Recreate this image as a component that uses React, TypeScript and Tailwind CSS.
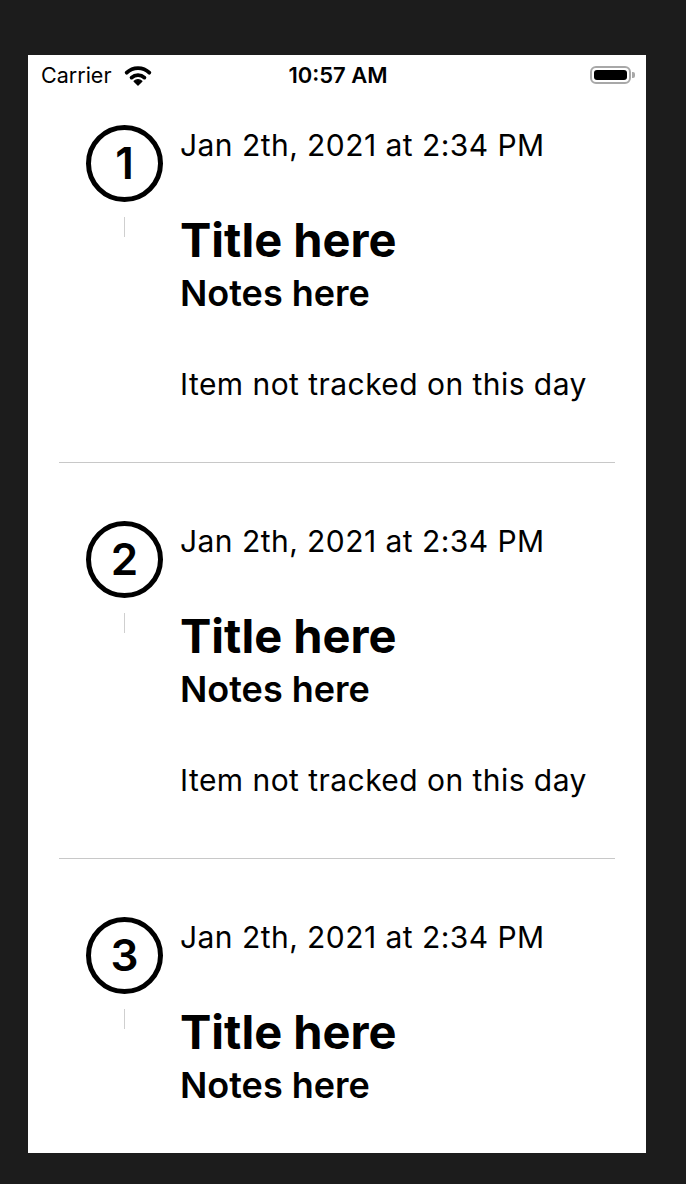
import React from "react";

type Entry = { n: number; date: string; title: string; notes: string; status?: string };

const entries: Entry[] = [
  { n: 1, date: "Jan 2th, 2021 at 2:34 PM", title: "Title here", notes: "Notes here", status: "Item not tracked on this day" },
  { n: 2, date: "Jan 2th, 2021 at 2:34 PM", title: "Title here", notes: "Notes here", status: "Item not tracked on this day" },
  { n: 3, date: "Jan 2th, 2021 at 2:34 PM", title: "Title here", notes: "Notes here" },
];

function Wifi() {
  return (
    <svg width="28" height="21" viewBox="0 0 28 21" className="ml-[13px]">
      <path d="M2.7 7.7 A16 16 0 0 1 25.3 7.7" fill="none" stroke="black" strokeWidth="3.8" strokeLinecap="round" />
      <path d="M7.6 12.6 A9.3 9.3 0 0 1 20.4 12.6" fill="none" stroke="black" strokeWidth="3.8" strokeLinecap="round" />
      <path d="M14 20 L10.2 16.2 A5.4 5.4 0 0 1 17.8 16.2 Z" fill="black" stroke="black" strokeWidth="1.4" strokeLinejoin="round" />
    </svg>
  );
}

function Battery() {
  return (
    <div className="flex items-center">
      <div className="w-[41px] h-[18px] rounded-[6px] border-[2px] border-[#a8a8a8] p-[2px]">
        <div className="w-full h-full rounded-[3px] bg-black" />
      </div>
      <div className="w-[3px] h-[6px] rounded-r-[2px] bg-[#a8a8a8] ml-[1px]" />
    </div>
  );
}

function EntryRow({ e }: { e: Entry }) {
  return (
    <div className="flex pl-[58px]">
      <div className="w-[77px] flex flex-col items-center shrink-0">
        <div className="w-[77px] h-[77px] rounded-full border-[5px] border-black flex items-center justify-center">
          <span className="text-[44px] leading-none font-semibold text-black -mt-[1px]">{e.n}</span>
        </div>
        <div className="w-px h-[20px] bg-[#cfcfcf] mt-[15px]" />
      </div>
      <div className="ml-[17px] flex flex-col text-black">
        <div className="mt-[3px] text-[30px] leading-[34px] tracking-[0.45px]">{e.date}</div>
        <div className="mt-[50px] text-[47px] leading-[56px] font-bold">{e.title}</div>
        <div className="mt-[3px] text-[36px] leading-[44px] font-semibold">{e.notes}</div>
        {e.status && (
          <div className="mt-[52px] mb-[61px] text-[30px] leading-[34px] tracking-[0.45px]">{e.status}</div>
        )}
      </div>
    </div>
  );
}

export default function App() {
  return (
    <div className="w-[686px] h-[1184px] bg-[#1c1c1c] pt-[55px] px-[28px] font-['Inter',sans-serif]">
      <div className="w-[618px] h-[1098px] bg-white overflow-hidden">
        {/* status bar */}
        <div className="h-[40px] flex items-center pl-[13px] pr-[11px]">
          <div className="flex-1 flex items-center">
            <span className="text-[21.5px] text-black">Carrier</span>
            <Wifi />
          </div>
          <span className="text-[22px] font-semibold text-black">10:57 AM</span>
          <div className="flex-1 flex justify-end">
            <Battery />
          </div>
        </div>

        <div className="pt-[30px]">
          {entries.map((e, i) => (
            <div key={e.n}>
              {i > 0 && <div className="h-px bg-[#c8c8c8] mx-[31px]" />}
              <div className={i > 0 ? "pt-[58px]" : ""}>
                <EntryRow e={e} />
              </div>
            </div>
          ))}
        </div>
      </div>
    </div>
  );
}
